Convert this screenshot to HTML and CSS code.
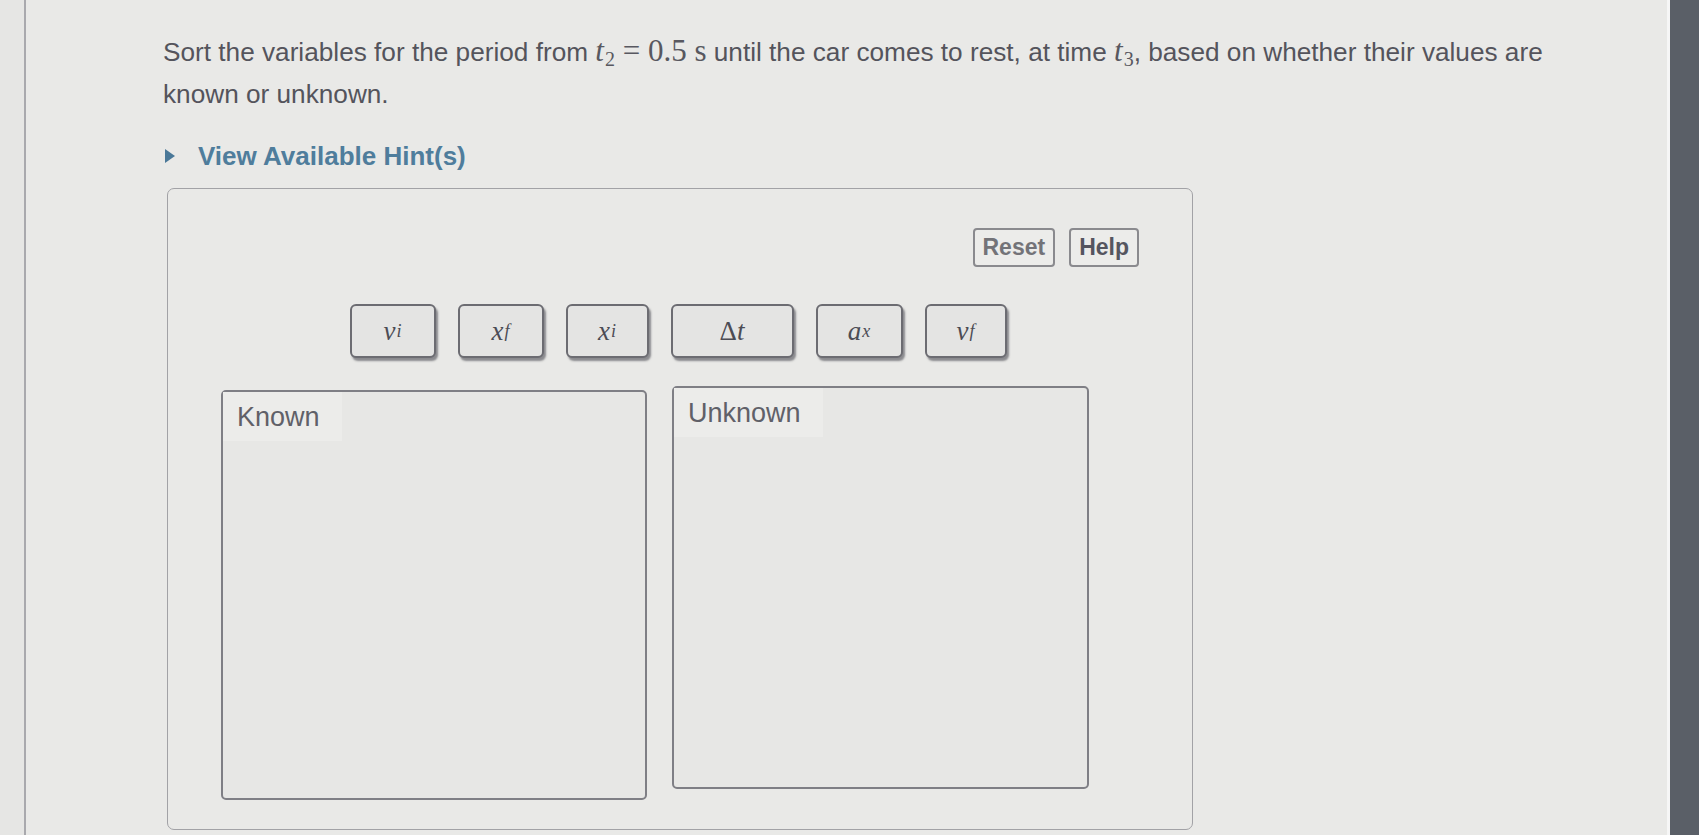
FILE: index.html
```html
<!DOCTYPE html>
<html>
<head>
<meta charset="utf-8">
<link rel="stylesheet" href="styles.css">
</head>
<body>
<div class="screen">
  <div class="gutter"></div>
  <main class="content">
    <p class="question">Sort the variables for the period from <span class="m"><i>t</i><sub>2</sub> = 0.5 s</span> until the car comes to rest, at time <span class="m"><i>t</i><sub>3</sub></span>, based on whether their values are known or unknown.</p>
    <div class="hint"><span class="tri"></span><span class="hint-text">View Available Hint(s)</span></div>
    <section class="panel">
      <div class="tools">
        <button class="btn reset">Reset</button>
        <button class="btn help">Help</button>
      </div>
      <div class="tiles">
        <div class="tile w86"><i>v</i><sub><i>i</i></sub></div>
        <div class="tile w86"><i>x</i><sub><i>f</i></sub></div>
        <div class="tile w83"><i>x</i><sub><i>i</i></sub></div>
        <div class="tile w123">Δ<i>t</i></div>
        <div class="tile w87"><i>a</i><sub><i>x</i></sub></div>
        <div class="tile w82"><i>v</i><sub><i>f</i></sub></div>
      </div>
      <div class="bins">
        <div class="bin known"><span class="bin-label">Known</span></div>
        <div class="bin unknown"><span class="bin-label">Unknown</span></div>
      </div>
    </section>
  </main>
  <div class="edge"></div>
  <div class="rightbar"></div>
</div>
</body>
</html>
```

FILE: styles.css
```css
html, body {
  margin: 0;
  padding: 0;
  height: 100%;
  overflow: hidden;
}
body {
  background: #e9e9e7;
  font-family: "Liberation Sans", Arial, sans-serif;
  color: #55555c;
}
.screen {
  display: flex;
  height: 835px;
}
.gutter {
  width: 24px;
  border-right: 2px solid #a9a9ad;
  background: #e6e6e4;
}
.content {
  flex: 1;
  padding-left: 137px;
  padding-top: 30px;
}
.question {
  margin: 0;
  width: 1420px;
  font-size: 26.2px;
  line-height: 42px;
  color: #54545c;
}
.m {
  font-family: "Liberation Serif", "DejaVu Serif", serif;
  font-size: 31px;
  color: #585860;
}
.m sub {
  font-size: 20px;
  vertical-align: -5px;
  line-height: 0;
  margin-left: 1px;
}
.hint {
  margin-top: 26px;
  display: flex;
  align-items: center;
  height: 30px;
}
.tri {
  width: 0;
  height: 0;
  border-top: 7px solid transparent;
  border-bottom: 7px solid transparent;
  border-left: 10px solid #4a7898;
  margin-left: 2px;
}
.hint-text {
  margin-left: 23px;
  font-size: 26px;
  font-weight: bold;
  color: #4f7d9c;
}
.panel {
  margin-top: 17px;
  margin-left: 4px;
  width: 1026px;
  height: 642px;
  border: 1px solid #a2a2a6;
  border-radius: 7px;
  box-sizing: border-box;
  padding-top: 39px;
}
.tools {
  display: flex;
  justify-content: flex-end;
  gap: 14px;
  padding-right: 53px;
}
.btn {
  font-family: "Liberation Sans", Arial, sans-serif;
  font-size: 23px;
  font-weight: bold;
  height: 39px;
  padding: 0 8px;
  background: #ececea;
  border: 2px solid #8a8a8e;
  border-radius: 4px;
  color: #737378;
}
.help {
  color: #55555f;
}
.tiles {
  margin-top: 37px;
  display: flex;
  justify-content: center;
  gap: 22px;
  padding-right: 4px;
}
.tile {
  height: 54px;
  box-sizing: border-box;
  display: flex;
  align-items: center;
  justify-content: center;
  background: #e4e4e3;
  border: 2px solid #6c6c72;
  border-radius: 6px;
  box-shadow: 2px 3px 2px rgba(60, 60, 70, 0.55);
  font-family: "Liberation Serif", "DejaVu Serif", serif;
  font-size: 27px;
  color: #4c4c55;
}
.tile sub {
  font-size: 18px;
  vertical-align: -6px;
  line-height: 0;
  margin-left: 1px;
}
.w86 { width: 86px; }
.w83 { width: 83px; }
.w123 { width: 123px; }
.w87 { width: 87px; }
.w82 { width: 82px; }
.bins {
  margin-top: 28px;
  display: flex;
  align-items: flex-start;
  gap: 25px;
  padding-left: 53px;
}
.bin {
  box-sizing: border-box;
  border: 2px solid #7f7f85;
  border-radius: 5px;
  background: #e7e7e5;
}
.known {
  width: 426px;
  height: 410px;
  margin-top: 4px;
}
.unknown {
  width: 417px;
  height: 403px;
}
.bin-label {
  display: inline-block;
  padding: 10px 22px 8px 14px;
  background: #ececea;
  font-size: 27px;
  color: #606068;
}
.edge {
  width: 3px;
  background: #f6f6f6;
}
.rightbar {
  width: 29px;
  background: #5a5f67;
}
```
